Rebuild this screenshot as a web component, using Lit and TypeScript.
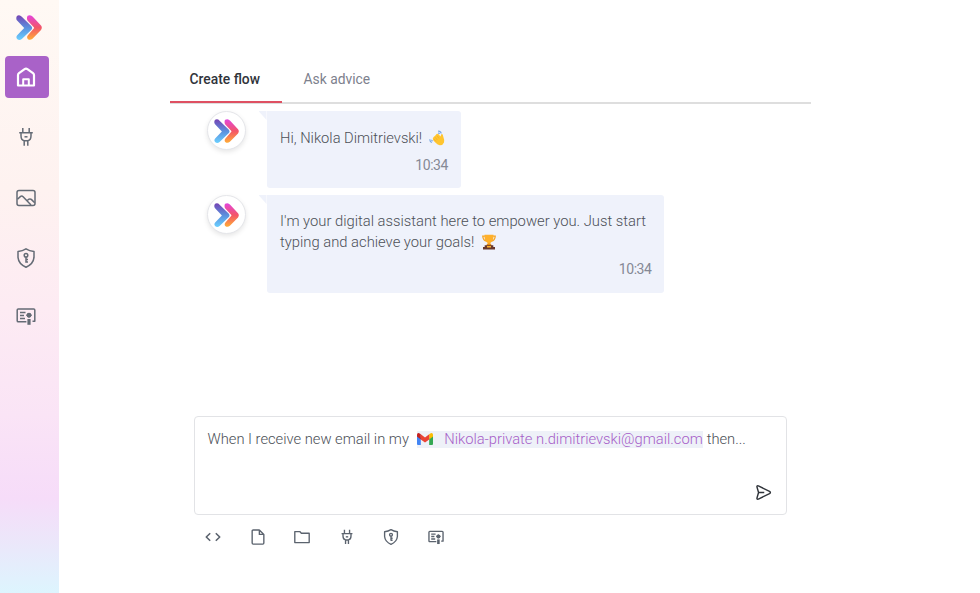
import { LitElement, html, css, svg } from "lit";
import { customElement, property } from "lit/decorators.js";

const logoShape = (id: string) => svg`
  <defs>
    <linearGradient id="${id}-cool" x1="0" y1="0" x2="0" y2="1">
      <stop offset="0" stop-color="#7544b4"></stop><stop offset=".5" stop-color="#5b8fdd"></stop><stop offset="1" stop-color="#6bd0ff"></stop>
    </linearGradient>
    <linearGradient id="${id}-warm" x1=".3" y1="0" x2=".3" y2="1">
      <stop offset="0" stop-color="#e345dc"></stop><stop offset=".5" stop-color="#f35568"></stop><stop offset="1" stop-color="#ffad36"></stop>
    </linearGradient>
  </defs>
  <path d="M11 3.1Q10.8 .3 13.8 .3Q15.6 .5 16.8 1.8L25 10.6Q26.6 12.7 25 15L16.5 23.7Q14.3 25.6 12 24.3Q10.2 22.5 11.9 20.2L17.8 13.6Q18.4 12.9 17.8 12.2L11.5 5.4Q10.9 4.3 11 3.1Z" fill="url(#${id}-warm)"></path>
  <path d="M.3 3.4Q.2 .5 3 .3Q4.5 .3 5.8 1.8L15.2 11Q17.1 12.9 15.2 14.9L5.8 23.9Q3.6 25.8 1.4 24.3Q-.5 22.4 1.2 20.2L8.2 13L1.1 5.5Q.3 4.6 .3 3.4Z" fill="url(#${id}-cool)"></path>`;

const shapes: Record<string, unknown> = {
  home: svg`<path d="M2 18.5V8Q2 7 3 6.2L8.6 2.1Q10 1.1 11.4 2.1L17 6.2Q18 7 18 8V18.5H2Z" stroke-width="2.2"></path><path d="M7.2 18V12.2H12.8V18" stroke-width="2"></path>`,
  plug: svg`<path d="M6.8 1V5.5M13.2 1V5.5M3.2 5.8H16.8M5 6V8.7Q5 13 8.2 13.7H11.8Q15 13 15 8.7V6M8.2 14V18.8M11.8 14V18.8"></path><path d="M8.5 9.8H11.5"></path>`,
  image: svg`<rect x="1" y="2.5" width="18" height="15" rx="2"></rect><path d="M1.5 11.2L4.6 8.4Q5.9 7.5 7.1 8.7L15 17M11.2 12.5L13 11.2Q14.2 10.5 15.3 11.4L18.7 14.7"></path>`,
  shield: svg`<path d="M10 .8Q13.4 3 18 3.4V9.4Q17.4 16 10 19.2Q2.6 16 2 9.4V3.4Q6.6 3 10 .8Z"></path><circle cx="10" cy="7.2" r="1.8"></circle><path d="M10 9V14.8M10 11.6H12M10 14H12"></path>`,
  cert: svg`<path d="M10.4 15.8H2.3Q1.2 15.8 1.2 14.7V4Q1.2 2.9 2.3 2.9H17.7Q18.8 2.9 18.8 4V15.2H16.5M4 6.4H9.5M4 9.4H8M4 12.5H9"></path><circle cx="13" cy="9.3" r="1.7" fill="currentColor"></circle><path d="M10.3 9.3H15.7M13 7V11.5"></path><path d="M13 13V18.8" stroke-width="3.2"></path>`,
  code: svg`<path d="M6.5 5.3L1.6 10L6.5 14.7M13.5 5.3L18.4 10L13.5 14.7" stroke-width="2"></path>`,
  file: svg`<path d="M11.7 1.3H4Q2.7 1.3 2.7 2.6V17.6Q2.7 18.9 4 18.9H16Q17.3 18.9 17.3 17.6V6.8L11.7 1.3V6.8H17"></path>`,
  folder: svg`<path d="M1 3.2H7.2L9.2 5.3H19V17H1V3.2Z"></path>`,
  send: svg`<path d="M1.4 3Q.7 .5 3.1 1.2L18 8.4Q20.4 10 18 11.6L3.1 18.8Q.7 19.5 1.4 17L3.4 10L1.4 3ZM3.5 10H11"></path>`,
};

@customElement("line-icon")
class LineIcon extends LitElement {
  @property() name = "home";
  @property({ type: Number }) weight = 1.5;
  static styles = css`
    :host { display: block; width: 20px; height: 20px; }
    svg { display: block; width: 100%; height: 100%; overflow: visible; fill: none; stroke: currentColor; stroke-linejoin: round; }
  `;
  render() {
    return html`<svg viewBox="0 0 20 20" stroke-width="${this.weight}">${shapes[this.name]}</svg>`;
  }
}

@customElement("brand-logo")
class BrandLogo extends LitElement {
  static styles = css`
    :host { display: block; width: 26px; height: 25px; }
    svg { display: block; width: 100%; height: 100%; }
  `;
  render() {
    return html`<svg viewBox="0 0 26 25" preserveAspectRatio="none">${logoShape("mark")}</svg>`;
  }
}

const wave = html`<svg class="emoji" viewBox="0 0 16 16">
  <path d="M9.1 1.1Q11.7 1 12.2 3.5M9.1 3.2Q10 3 10.5 4M.9 9.2Q.6 12 3 12.5M2.6 9.8Q2.7 10.8 3.8 11" fill="none" stroke="#78a9e8" stroke-width="1.2"></path>
  <path d="M4.4 7.2L6.6 5.2Q8.2 3 9.6 4.2L11.5 6.4L12 5.1Q12.4 3.8 13.3 4.2Q14 4.5 14.1 6Q15.7 10.2 15 12.4Q13.8 15.4 10.8 15.3Q8.6 15.2 6.9 13.1L4.4 10.4Q3.2 8.4 4.4 7.2Z" fill="#ffc52f"></path>
  <path d="M6.2 7.3L8.4 10M8.1 5.8L10 8.5M4.9 9L7.2 11.4" fill="none" stroke="#eda52a" stroke-width=".6"></path>
</svg>`;

const trophy = html`<svg class="emoji" viewBox="0 0 16 16">
  <path d="M4 2.2H1.8Q2 6.6 5.7 7M12 2.2H14.2Q14 6.6 10.3 7" fill="none" stroke="#f5a31f" stroke-width="1.3"></path>
  <path d="M3.5 .8H12.5Q12.8 7.4 9.3 9V11H6.7V9Q3.2 7.4 3.5 .8Z" fill="#ffb02b"></path>
  <path d="M6 9.8H10L10.8 12H5.2Z" fill="#e18b16"></path>
  <path d="M3.7 11.2H12.3V13H14V15.4H2V13H3.7Z" fill="#68382c"></path>
  <rect x="6" y="12" width="4" height="1.5" fill="#ffb02b"></rect>
</svg>`;

const gmail = html`<svg class="gmail" viewBox="0 0 16 12">
  <path d="M0 2.5L3.8 5.3V12H1Q0 12 0 11Z" fill="#4285f4"></path>
  <path d="M16 2.5L12.2 5.3V12H15Q16 12 16 11Z" fill="#34a853"></path>
  <path d="M12.2 1.2L13.3 .4Q14.3 -.3 15.3 .3Q16 .8 16 1.8V3.6L12.2 6.4Z" fill="#fbbc04"></path>
  <path d="M3.8 1.2L8 4.4L12.2 1.2V6.4L8 9.6L3.8 6.4Z" fill="#ea4335"></path>
  <path d="M0 3.6V1.8Q0 .8 .7 .3Q1.7 -.3 2.7 .4L3.8 1.2V6.4Z" fill="#c5221f"></path>
</svg>`;

@customElement("app-root")
class AppRoot extends LitElement {
  static styles = css`
    :host { display: flex; width: 980px; height: 593px; overflow: hidden; background: #fff; font: 300 14.77px/21px Roboto, sans-serif; color: #4c5057; }
    * { box-sizing: border-box; }
    .sidebar { flex: none; width: 59px; height: 100%; padding: 14.5px 0 0 4.5px; background: linear-gradient(#fff9f4 0%, #fef2f0 32%, #fdebf3 52%, #fae4f6 70%, #f6dcf9 84%, #ece6fa 91%, #ddf5fe 100%); color: #646b75; }
    .sidebar brand-logo { margin-left: 11.5px; }
    .nav { display: grid; width: 44.5px; grid-template-rows: 42.5px 77px 46px 74px 42px; justify-items: center; margin-top: 16px; }
    .item { display: grid; place-items: center; width: 44.5px; }
    .item line-icon { margin-right: 2.3px; }
    .active { border-radius: 4px; background: #a962c8; color: #fff; }
    .main { flex: 1; padding: 56px 169px 0 110.5px; }
    .tabs { display: flex; height: 48px; border-bottom: 2px solid #dedede; font-weight: 400; font-size: 13.85px; line-height: 47px; color: #7d818d; }
    .tab { height: 47px; padding: 0 20px; white-space: nowrap; }
    .tab.on { width: 112px; margin-right: 2px; font-weight: 500; color: #30343b; border-bottom: 2px solid #df5062; }
    .chat { display: flex; flex-direction: column; gap: 7px; height: 312px; padding: 7px 0 0 37px; }
    .message { display: flex; align-items: flex-start; }
    .avatar { display: grid; place-items: center; width: 39px; height: 39px; border: 1px solid #e5e6ea; border-radius: 50%; background: #fff; box-shadow: 0 2px 5px #0000001a; }
    .avatar brand-logo { width: 25px; height: 24px; }
    .bubble { display: flex; flex-direction: column; position: relative; width: 397.5px; height: 98px; margin-left: 21px; padding: 16px 12.5px 16px 13.6px; border-radius: 0 3px 3px 3px; background: #eff2fb; }
    .bubble.short { width: 194px; height: 77px; padding-top: 17px; font-size: 14.7px; }
    .bubble::before { content: ""; position: absolute; right: 100%; top: 0; width: 8px; height: 9px; background: inherit; clip-path: polygon(0 0, 100% 0, 100% 100%); }
    .line { display: block; white-space: nowrap; }
    .emoji { width: 16px; height: 16px; margin-left: 6.5px; vertical-align: -3px; }
    .time { align-self: flex-end; margin-top: 6px; font-weight: 400; font-size: 14px; letter-spacing: -.42px; color: #858995; }
    .composer { display: flex; flex-direction: column; justify-content: space-between; width: 593.5px; height: 99px; margin-left: 24px; padding: 12px 13px 14px; border: 1px solid #e2e3e6; border-radius: 4px; font-size: 14.72px; }
    .prompt { display: flex; align-items: center; height: 20px; white-space: pre; }
    .chip { display: flex; align-items: center; height: 17px; margin: 0 4px 0 8.3px; background: #eef1f8; color: #a75fc8; }
    .gmail { width: 16px; height: 12px; margin-right: 11px; }
    .send { width: 15px; height: 15px; align-self: flex-end; margin-right: 2px; color: #30343a; }
    .tools { display: flex; gap: 28.6px; margin: 14px 0 0 35.5px; color: #5b636e; }
    .tools line-icon { width: 16px; height: 16px; }
  `;
  render() {
    return html`
      <nav class="sidebar">
        <brand-logo></brand-logo>
        <div class="nav">
          <div class="item active"><line-icon name="home"></line-icon></div>
          ${["plug", "image", "shield", "cert"].map((n) => html`<div class="item"><line-icon name="${n}"></line-icon></div>`)}
        </div>
      </nav>
      <main class="main">
        <div class="tabs"><div class="tab on">Create flow</div><div class="tab">Ask advice</div></div>
        <section class="chat">
          <div class="message">
            <div class="avatar"><brand-logo></brand-logo></div>
            <div class="bubble short"><span class="line">Hi, Nikola Dimitrievski!${wave}</span><span class="time">10:34</span></div>
          </div>
          <div class="message">
            <div class="avatar"><brand-logo></brand-logo></div>
            <div class="bubble"><span class="line">I'm your digital assistant here to empower you. Just start</span><span class="line">typing and achieve your goals!${trophy}</span><span class="time">10:34</span></div>
          </div>
        </section>
        <div class="composer">
          <div class="prompt"><span>When I receive new email in my</span><span class="chip">${gmail}<span>Nikola-private n.dimitrievski@gmail.com</span></span><span>then...</span></div>
          <line-icon class="send" name="send" weight="1.9"></line-icon>
        </div>
        <div class="tools">${["code", "file", "folder", "plug", "shield", "cert"].map((n) => html`<line-icon name="${n}" weight="1.7"></line-icon>`)}</div>
      </main>`;
  }
}
